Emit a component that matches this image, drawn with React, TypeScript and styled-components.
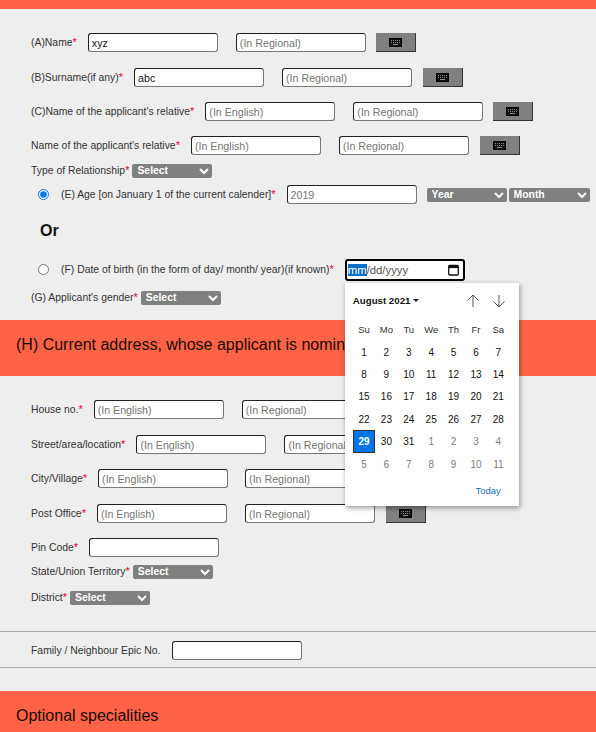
import styled, {createGlobalStyle} from "styled-components";

const coral = "#ff6347";

const GlobalStyle = createGlobalStyle`
    html, body {
        margin: 0;
        padding: 0;
        background: #eeeeee;
        font-family: "Liberation Sans", Arial, sans-serif;
    }
`;

const weekDays = ["Su", "Mo", "Tu", "We", "Th", "Fr", "Sa"];

const calendarDays = [
    [1, 2, 3, 4, 5, 6, 7],
    [8, 9, 10, 11, 12, 13, 14],
    [15, 16, 17, 18, 19, 20, 21],
    [22, 23, 24, 25, 26, 27, 28],
    [29, 30, 31, 1, 2, 3, 4],
    [5, 6, 7, 8, 9, 10, 11],
];

function KeyboardIcon() {
    return (
        <svg width="13" height="9" viewBox="0 0 13 9">
            <rect x="0.5" y="0.5" width="12" height="8" fill="#111" stroke="#000"/>
            <path d="M2 2.5h9M2 4.5h9" stroke="#8a8a8a" strokeDasharray="1 1"/>
            <path d="M4 6.5h5" stroke="#8a8a8a"/>
        </svg>
    );
}

function CalendarIcon() {
    return (
        <svg width="11" height="12" viewBox="0 0 11 12">
            <rect x="0.7" y="1.5" width="9.6" height="9.5" rx="1" fill="none" stroke="#111" strokeWidth="1.3"/>
            <rect x="0.7" y="1.5" width="9.6" height="2.6" fill="#111"/>
        </svg>
    );
}

function ArrowIcon({down}: { down?: boolean }) {
    return (
        <svg width="14" height="14" viewBox="0 0 14 14">
            <path
                d={down ? "M7 1v12M1.5 7.5L7 13l5.5-5.5" : "M7 13V1M1.5 6.5L7 1l5.5 5.5"}
                fill="none"
                stroke="#444"
                strokeWidth="0.9"
            />
        </svg>
    );
}

function Required({children}: { children: string }) {
    return <Label>{children}<Star>*</Star></Label>;
}

function NameRow({label, value, top, gap, keyGap}: {
    label: string;
    value?: string;
    top: number;
    gap?: number;
    keyGap?: number;
}) {
    return (
        <Row $top={top}>
            <Required>{label}</Required>
            <TextInput defaultValue={value} placeholder="(In English)" $after={gap ?? 18}/>
            <TextInput placeholder="(In Regional)" $after={keyGap ?? 11}/>
            <KeyboardButton><KeyboardIcon/></KeyboardButton>
        </Row>
    );
}

function DatePopup() {
    return (
        <Popup>
            <PopupHeader>
                <MonthLabel>August 2021 <MonthCaret/></MonthLabel>
                <ArrowGroup>
                    <ArrowIcon/>
                    <ArrowIcon down/>
                </ArrowGroup>
            </PopupHeader>
            <DayGrid>
                {weekDays.map((day) => <WeekDay key={day}>{day}</WeekDay>)}
                {calendarDays.map((week, row) => week.map((day) => (
                    <DayCell key={`${row}-${day}`} $muted={(row === 4 && day < 20) || row === 5} $active={day === 29}>
                        {day}
                    </DayCell>
                )))}
            </DayGrid>
            <TodayLink>Today</TodayLink>
        </Popup>
    );
}

function App() {
    return (
        <>
            <GlobalStyle/>
            <TopBar/>
            <Section $top={24}>
                <Row $top={0}>
                    <Required>(A)Name</Required>
                    <TextInput defaultValue="xyz" $after={18}/>
                    <TextInput placeholder="(In Regional)" $after={10}/>
                    <KeyboardButton><KeyboardIcon/></KeyboardButton>
                </Row>
                <Row $top={16}>
                    <Required>(B)Surname(if any)</Required>
                    <TextInput defaultValue="abc" $after={18}/>
                    <TextInput placeholder="(In Regional)" $after={11}/>
                    <KeyboardButton><KeyboardIcon/></KeyboardButton>
                </Row>
                <NameRow label="(C)Name of the applicant's relative" top={15} keyGap={10}/>
                <NameRow label="Name of the applicant's relative" top={15}/>
                <Row $top={6}>
                    <TightLabel>Type of Relationship<Star>*</Star></TightLabel>
                    <GraySelect $width={80}><option>Select</option></GraySelect>
                </Row>
                <RadioRow $top={5}>
                    <Radio type="radio" name="dob" defaultChecked/>
                    <Required>(E) Age [on January 1 of the current calender]</Required>
                    <TextInput placeholder="2019" $after={10}/>
                    <GraySelect $width={80}><option>Year</option></GraySelect>
                    <GraySelect $width={81}><option>Month</option></GraySelect>
                </RadioRow>
                <OrText>Or</OrText>
                <RadioRow $top={19}>
                    <Radio type="radio" name="dob"/>
                    <Required>(F) Date of birth (in the form of day/ month/ year)(if known)</Required>
                    <DateField>
                        <DateText><Selected>mm</Selected>/dd/yyyy</DateText>
                        <CalendarIcon/>
                        <DatePopup/>
                    </DateField>
                </RadioRow>
                <Row $top={9}>
                    <TightLabel>(G) Applicant's gender<Star>*</Star></TightLabel>
                    <GraySelect $width={80}><option>Select</option></GraySelect>
                </Row>
            </Section>
            <Banner $height={56} $top={13}>(H) Current address, whose applicant is nominated</Banner>
            <Section $top={24}>
                <NameRow label="House no." top={0}/>
                <NameRow label="Street/area/location" top={16}/>
                <NameRow label="City/Village" top={15} gap={17}/>
                <NameRow label="Post Office" top={16}/>
                <Row $top={15}>
                    <Required>Pin Code</Required>
                    <TextInput $after={0}/>
                </Row>
                <Row $top={5}>
                    <TightLabel>State/Union Territory<Star>*</Star></TightLabel>
                    <GraySelect $width={80}><option>Select</option></GraySelect>
                </Row>
                <Row $top={7}>
                    <TightLabel>District<Star>*</Star></TightLabel>
                    <GraySelect $width={80}><option>Select</option></GraySelect>
                </Row>
            </Section>
            <Divider $top={24}/>
            <Row $top={9}>
                <PlainLabel>Family / Neighbour Epic No.</PlainLabel>
                <TextInput $after={0}/>
            </Row>
            <Divider $top={7}/>
            <Banner $height={41} $top={23} $clip>Optional specialities</Banner>
        </>
    );
}

const TopBar = styled.div`
    height: 9px;
    background: ${coral};
`;

const Section = styled.section<{ $top: number }>`
    display: flex;
    flex-direction: column;
    padding-top: ${(p) => p.$top}px;
`;

const Row = styled.div<{ $top: number }>`
    display: flex;
    align-items: center;
    height: 19px;
    margin-top: ${(p) => p.$top}px;
    padding-left: 31px;
`;

const RadioRow = styled(Row)`
    padding-left: 38px;
`;

const Label = styled.label`
    margin-right: 11px;
    font-size: 10.4px;
    line-height: 13px;
    color: #333333;
    white-space: nowrap;
`;

const TightLabel = styled(Label)`
    margin-right: 3px;
`;

const PlainLabel = styled(Label)`
    margin-right: 12px;
`;

const Star = styled.span`
    color: #e0002a;
    font-size: 11px;
`;

const TextInput = styled.input<{ $after: number }>`
    box-sizing: border-box;
    flex: none;
    width: 130px;
    height: 19px;
    margin: 0 ${(p) => p.$after}px 0 0;
    padding: 0 3px;
    border: 1px solid;
    border-color: #222222 #777777 #777777 #222222;
    border-radius: 3px;
    background: #ffffff;
    font-family: "Liberation Sans", Arial, sans-serif;
    font-size: 10.67px;
    color: #111111;

    &::placeholder {
        color: #757575;
    }
`;

const KeyboardButton = styled.button`
    display: flex;
    align-items: center;
    justify-content: center;
    flex: none;
    box-sizing: border-box;
    width: 40px;
    height: 19px;
    padding: 0;
    border: none;
    border-right: 1px solid #333333;
    border-bottom: 1px solid #333333;
    background: #808080;
`;

const GraySelect = styled.select<{ $width: number }>`
    flex: none;
    box-sizing: border-box;
    width: ${(p) => p.$width}px;
    height: 14px;
    margin: 0 2px 0 0;
    padding: 0 0 0 1px;
    border: none;
    border-radius: 2px;
    background-color: #808080;
    color: #ffffff;
    font-family: "Liberation Sans", Arial, sans-serif;
    font-size: 10.4px;
    font-weight: 700;
`;

const Radio = styled.input`
    flex: none;
    width: 11px;
    height: 11px;
    margin: 0 12px 0 0;
`;

const OrText = styled.div`
    margin-top: 17px;
    padding-left: 40px;
    font-size: 16px;
    line-height: 20px;
    font-weight: 700;
    color: #111111;
`;

const DateField = styled.div`
    position: relative;
    display: flex;
    align-items: center;
    justify-content: space-between;
    flex: none;
    box-sizing: border-box;
    width: 120px;
    height: 22px;
    padding: 0 4px 0 1px;
    border: 2px solid #000000;
    border-radius: 3px;
    background: #ffffff;
`;

const DateText = styled.span`
    font-size: 11.3px;
    color: #555555;
`;

const Selected = styled.span`
    background: #0a6ccb;
    color: #ffffff;
`;

const Popup = styled.div`
    position: absolute;
    top: 22px;
    left: -2px;
    z-index: 2;
    box-sizing: border-box;
    width: 174px;
    height: 223px;
    padding: 0 8px;
    background: #ffffff;
    box-shadow: 1px 2px 5px rgba(0, 0, 0, 0.4);
`;

const PopupHeader = styled.div`
    display: flex;
    align-items: center;
    justify-content: space-between;
    height: 36px;
    padding-right: 5px;
`;

const MonthLabel = styled.span`
    display: flex;
    align-items: center;
    gap: 3px;
    font-size: 9.7px;
    font-weight: 700;
    color: #111111;
    white-space: nowrap;
`;

const MonthCaret = styled.span`
    width: 0;
    height: 0;
    border-top: 3px solid #222222;
    border-left: 3px solid transparent;
    border-right: 3px solid transparent;
`;

const ArrowGroup = styled.div`
    display: flex;
    gap: 12px;
`;

const DayGrid = styled.div`
    display: grid;
    grid-template-columns: repeat(7, 22.4px);
    grid-auto-rows: 22.4px;
`;

const WeekDay = styled.div`
    display: flex;
    align-items: center;
    justify-content: center;
    font-size: 9.5px;
    color: #333333;
`;

const DayCell = styled.div<{ $muted?: boolean; $active?: boolean }>`
    display: flex;
    align-items: center;
    justify-content: center;
    font-size: 10px;
    font-weight: ${(p) => (p.$active ? 700 : 400)};
    color: ${(p) => (p.$active ? "#ffffff" : p.$muted ? "#808080" : "#111111")};
    background: ${(p) => (p.$active ? "#0075e8" : "transparent")};
    border: ${(p) => (p.$active ? "1px solid #333333" : "none")};
`;

const TodayLink = styled.div`
    margin-top: 10px;
    padding-right: 10px;
    text-align: right;
    font-size: 9.5px;
    color: #1a6fb5;
`;

const Banner = styled.div<{ $height: number; $top: number; $clip?: boolean }>`
    display: flex;
    align-items: ${(p) => (p.$clip ? "flex-start" : "center")};
    box-sizing: border-box;
    height: ${(p) => p.$height}px;
    margin-top: ${(p) => p.$top}px;
    padding: ${(p) => (p.$clip ? "16px 16px 0" : "0 16px 6px")};
    background: ${coral};
    font-size: 16px;
    line-height: 18px;
    color: #1a0a06;
    white-space: nowrap;
`;

const Divider = styled.hr<{ $top: number }>`
    height: 1px;
    margin: ${(p) => p.$top}px 0 0;
    border: none;
    background: #aaaaaa;
`;

export default App;
